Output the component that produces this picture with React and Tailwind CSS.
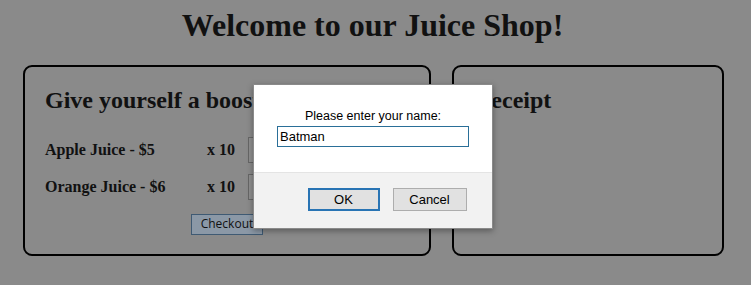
export default function App() {
  const serif = { fontFamily: '"Liberation Serif", "Times New Roman", serif' };
  const rows = [
    { name: 'Apple Juice - $5', qty: 10 },
    { name: 'Orange Juice - $6', qty: 10 },
  ];

  return (
    <div className="relative w-[751px] h-[285px] bg-[#8a8a8a] overflow-hidden text-[#111]" style={serif}>
      <h1 className="text-[32px] font-bold text-center pt-[7px] pr-[6px] leading-[37px]">Welcome to our Juice Shop!</h1>

      <div className="flex gap-[21px] px-[23px] mt-[21px]">
        {/* Order card */}
        <div className="w-[408px] h-[191px] border-2 border-black rounded-[9px] pl-[20px] pt-[19px]">
          <h2 className="text-[24px] font-bold leading-[28px]">Give yourself a boost!</h2>
          <div className="mt-[23px] flex flex-col gap-[11px]">
            {rows.map((r) => (
              <div key={r.name} className="flex items-center h-[26px] text-[16px] font-bold">
                <span className="w-[162px]">{r.name}</span>
                <span className="w-[41px]">x {r.qty}</span>
                <div className="w-[60px] h-[26px] border border-[#666] bg-[#8f8f8f]" />
              </div>
            ))}
          </div>
          <div className="mt-[11px] pl-[146px]">
            <button
              className="w-[72px] h-[21px] border border-[#3f5a73] bg-[#8b98a6] text-[12px] text-[#111] leading-none"
              style={{ fontFamily: '"Open Sans", "DejaVu Sans", sans-serif' }}
            >
              Checkout
            </button>
          </div>
        </div>

        {/* Receipt card */}
        <div className="w-[272px] h-[191px] border-2 border-black rounded-[9px] pl-[20px] pt-[19px]">
          <h2 className="text-[24px] font-bold leading-[28px]">Receipt</h2>
        </div>
      </div>

      {/* Prompt dialog */}
      <div
        className="absolute left-[253px] top-[84px] w-[240px] h-[145px] bg-white border border-[#8a8a8a] shadow-[0_2px_6px_rgba(0,0,0,0.35)] flex flex-col"
        style={{ fontFamily: '"Liberation Sans", Arial, sans-serif' }}
      >
        <div className="flex-1 flex flex-col items-center pt-[24px]">
          <div className="text-[12.5px] leading-[14px] text-black">Please enter your name:</div>
          <div className="mt-[3px] w-[192px] h-[21px] border border-[#2a6f98] px-[2px] text-[13px] leading-[19px] text-black">
            Batman
          </div>
        </div>
        <div className="h-[56px] bg-[#f2f2f2] border-t border-[#e4e4e4] flex justify-center gap-[13px] pt-[15px] pl-[28px]">
          <button className="w-[72px] h-[23px] border-2 border-[#2874b4] bg-[#e1e1e1] text-[13px] text-black">OK</button>
          <button className="w-[74px] h-[23px] border border-[#adadad] bg-[#e1e1e1] text-[13px] text-black">Cancel</button>
        </div>
      </div>
    </div>
  );
}
